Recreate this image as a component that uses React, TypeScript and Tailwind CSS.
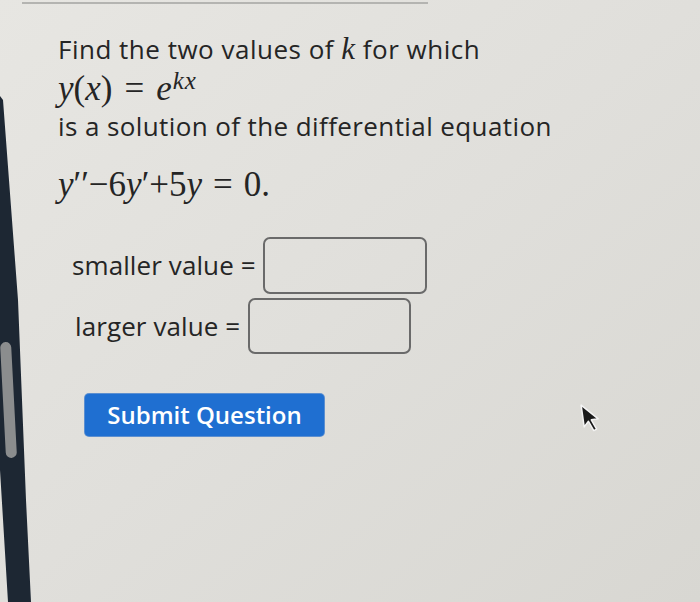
import React from 'react';

const serif = "font-['Liberation_Serif','DejaVu_Serif',serif] italic";

const App = () => {
  return (
    <div className="relative w-[700px] h-[602px] overflow-hidden bg-gradient-to-br from-[#e7e6e2] via-[#e0dfdb] to-[#d8d7d2] text-[#252525] font-['Open_Sans','Liberation_Sans',sans-serif]">
      <div className="ml-[22px] mt-[2px] h-[2px] w-[406px] bg-[#b4b4b1]" />

      <div className="pl-[58px] pt-[27px]">
        <p className="text-[26px] leading-[36px] tracking-[0.5px]">
          Find the two values of <span className={`${serif} text-[31px]`}>k</span> for which
        </p>
        <div className={`${serif} text-[35px] leading-[40px] not-italic mt-[2px]`}>
          <span className="italic">y</span>(<span className="italic">x</span>)<span className="mx-[12px]">=</span><span className="italic">e</span>
          <sup className="italic text-[25px] relative -top-[11px] ml-[1px] tracking-[1px]">kx</sup>
        </div>
        <p className="text-[26px] leading-[34px] tracking-[0.4px]">is a solution of the differential equation</p>

        <div className={`${serif} not-italic text-[35px] mt-[22px] leading-[40px]`}>
          <span className="italic">y</span>′′−6<span className="italic">y</span>′+5<span className="italic">y</span><span className="mx-[11px]">=</span>0.
        </div>

        <div className="mt-[32px] flex items-center pl-[14px] text-[26px]">
          <span className="tracking-[0.1px]">smaller value =</span>
          <div className="ml-[7px] h-[57px] w-[164px] rounded-[7px] border-2 border-[#6a6a6a]" />
        </div>
        <div className="mt-[4px] flex items-center pl-[17px] text-[26px]">
          <span className="tracking-[0.1px]">larger value =</span>
          <div className="ml-[8px] h-[56px] w-[163px] rounded-[7px] border-2 border-[#6a6a6a]" />
        </div>

        <button className="ml-[27px] mt-[40px] h-[42px] w-[239px] rounded-[4px] bg-[#1f6fd1] text-[24px] font-semibold text-white shadow-[0_0_0_1px_#5c8fd0]">
          Submit Question
        </button>
      </div>

      {/* bezel edge of the monitor */}
      <div className="absolute inset-0 bg-[#1d2733] [clip-path:polygon(0_96px,3px_100px,18px_300px,26px_500px,31px_602px,8px_602px,0_470px)]" />
      <div className="absolute left-[3px] top-[342px] h-[116px] w-[11px] rounded-full bg-[#8b8d8e] rotate-[-3deg]" />

      {/* mouse pointer */}
      <svg className="absolute left-[580px] top-[402px]" width="22" height="32" viewBox="0 0 22 32">
        <path d="M3 2 L3 24 L8 19 L12 29 L15 28 L11 18 L18 18 Z" fill="#1a1a1a" stroke="#f4f4f4" strokeWidth="1.5" strokeLinejoin="round" transform="rotate(-8 10 16)" />
      </svg>
    </div>
  );
};

export default App;
